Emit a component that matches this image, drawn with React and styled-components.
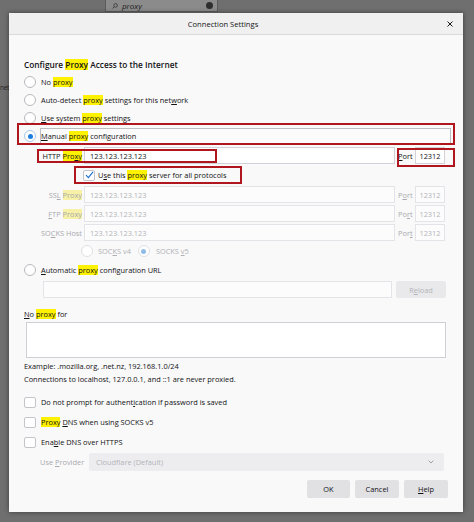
import React from 'react';
import styled, { createGlobalStyle, css } from 'styled-components';

const GlobalStyle = createGlobalStyle`
  html, body { margin: 0; padding: 0; }
  body {
    background: #6f6f6f;
    font-family: "Open Sans", "Noto Sans", sans-serif;
    font-size: 7.4px;
    color: #121214;
  }
  * { box-sizing: border-box; }
`;

const Page = styled.div`
  width: 474px;
  height: 522px;
  overflow: hidden;
  background: #6f6f6f;
`;

const TopStrip = styled.div`
  height: 13px;
  padding-left: 105px;
`;

const SearchBox = styled.div`
  width: 113px;
  height: 12px;
  background: #8b8b8b;
  border: 1px solid #5c5c5c;
  border-top: none;
  display: flex;
  align-items: center;
  gap: 4px;
  padding: 0 4px 0 6px;
  color: #1c1c1c;
  font-size: 8px;
  font-style: italic;
`;

const ClearDot = styled.span`
  margin-left: auto;
  width: 7px;
  height: 7px;
  border-radius: 50%;
  background: #2e2e2e;
`;

const Stage = styled.div`
  display: flex;
`;

const Gutter = styled.div`
  width: 9px;
  flex: none;
  padding-top: 69px;
  font-size: 6.6px;
  letter-spacing: -0.4px;
  line-height: 12px;
  color: #262626;
  white-space: nowrap;
`;

const Dialog = styled.div`
  width: 454px;
  height: 499px;
  background: #f9f9fa;
  box-shadow: 0 0 5px rgba(0, 0, 0, 0.45);
  display: flex;
  flex-direction: column;
`;

const Header = styled.div`
  height: 22px;
  flex: none;
  background: #f0f0f0;
  border-bottom: 1px solid #dadadd;
  display: flex;
  align-items: center;
`;

const Title = styled.div`
  flex: 1;
  text-align: center;
  font-size: 7.6px;
`;

const Close = styled.div`
  width: 26px;
  display: flex;
  justify-content: center;
  color: #222;
`;

const Body = styled.div`
  position: relative;
  padding: 24px 17px 0 15px;
  display: flex;
  flex-direction: column;
`;

const Heading = styled.div`
  font-size: 8.3px;
  font-weight: 600;
  line-height: 12px;
  height: 12px;
`;

const Mark = styled.span`
  background: #fff200;
`;

const Row = styled.div`
  position: relative;
  height: ${(p) => p.$h || 18}px;
  margin-top: ${(p) => p.$mt || 0}px;
  padding-left: ${(p) => p.$indent || 0}px;
  display: flex;
  align-items: center;
  gap: ${(p) => (p.$gap != null ? p.$gap : 5)}px;
`;

const Radio = styled.span`
  flex: none;
  width: 12px;
  height: 12px;
  border-radius: 50%;
  border: 1px solid ${(p) => (p.$disabled ? '#e0e0e4' : p.$on ? '#a9c9ea' : '#b9b9be')};
  background: #fff;
  display: flex;
  align-items: center;
  justify-content: center;
  &::after {
    content: '';
    display: ${(p) => (p.$on ? 'block' : 'none')};
    width: 5px;
    height: 5px;
    border-radius: 50%;
    background: ${(p) => (p.$disabled ? '#8fbce6' : '#1a7ee0')};
  }
`;

const Box = styled.span`
  flex: none;
  width: 12px;
  height: 11px;
  border-radius: 2px;
  border: 1px solid #c4c4c9;
  background: #fff;
  display: flex;
  align-items: center;
  justify-content: center;
`;

const FocusLabel = styled.span`
  flex: 1;
  height: 16px;
  margin-right: -5px;
  border: 1px solid #bdbdc2;
  background: #fbfbfb;
  display: flex;
  align-items: center;
`;

const RedBox = styled.span`
  position: absolute;
  left: ${(p) => p.$x}px;
  top: ${(p) => p.$y}px;
  width: ${(p) => p.$w}px;
  height: ${(p) => p.$h}px;
  border: 2px solid #b0161d;
  pointer-events: none;
  z-index: 2;
`;

const ProxyGrid = styled.div`
  margin-top: 2px;
  display: grid;
  grid-template-columns: 58px 311px 16px 30px;
  grid-template-rows: 17px 18px 17px 17px 17px 16px;
  column-gap: 2px;
  row-gap: 2px;
`;

const Label = styled.span`
  position: relative;
  display: flex;
  align-items: center;
  justify-content: ${(p) => (p.$left ? 'flex-start' : 'flex-end')};
  padding-left: ${(p) => (p.$left ? 1 : 0)}px;
  color: ${(p) => (p.$disabled ? '#a9a9ae' : 'inherit')};
  white-space: nowrap;
  ${(p) =>
    p.$disabled &&
    css`
      ${Mark} {
        background: #f6f1a6;
      }
    `}
`;

const Field = styled.input`
  width: 100%;
  height: 100%;
  margin: 0;
  padding: 0 ${(p) => (p.$narrow ? 3 : 5)}px;
  font: inherit;
  border: 1px solid ${(p) => (p.disabled ? '#e4e4e8' : '#d2d2d8')};
  background: ${(p) => (p.disabled ? '#fcfcfc' : '#fff')};
  color: ${(p) => (p.disabled ? '#b3b3b8' : '#121214')};
  text-align: ${(p) => (p.$narrow ? 'center' : 'left')};
  outline: none;
  -webkit-text-fill-color: currentColor;
`;

const CheckItem = styled.div`
  position: relative;
  grid-column: 2 / 5;
  justify-self: start;
  margin-left: -1px;
  display: flex;
  align-items: center;
  gap: 3px;
`;

const VersionRow = styled.div`
  grid-column: 2 / 5;
  display: flex;
  align-items: center;
  margin-left: -3px;
  color: #b0b0b5;
`;

const VersionItem = styled.span`
  display: flex;
  align-items: center;
  gap: ${(p) => p.$gap}px;
  margin-right: 7px;
`;

const UrlField = styled(Field)`
  flex: 1;
  width: auto;
`;

const GhostButton = styled.button`
  width: 50px;
  height: 17px;
  flex: none;
  border: none;
  border-radius: 2px;
  background: #e9e9ec;
  color: #b4b4b8;
  font: inherit;
  padding: 0;
`;

const SectionLabel = styled.div`
  margin-top: 10px;
  line-height: 12px;
`;

const Exceptions = styled.textarea`
  margin: 2px 0 0 2px;
  height: 36px;
  width: 420px;
  resize: none;
  border: 1px solid #cfcfd6;
  background: #fff;
  font: inherit;
  outline: none;
`;

const Hints = styled.div`
  margin-top: 2px;
  line-height: 13px;
`;

const CheckList = styled.div`
  margin-top: 6px;
  display: flex;
  flex-direction: column;
`;

const ProviderLabel = styled.span`
  width: 49px;
  flex: none;
  color: #a9a9ae;
`;

const Select = styled.div`
  flex: 1;
  height: 18px;
  margin-right: 2px;
  background: #ededf0;
  border-radius: 2px;
  color: #b3b3b8;
  display: flex;
  align-items: center;
  padding: 0 10px 0 7px;
  justify-content: space-between;
`;

const Buttons = styled.div`
  margin-top: 9px;
  margin-right: -2px;
  display: flex;
  justify-content: flex-end;
  gap: 5px;
`;

const Button = styled.button`
  width: ${(p) => p.$w || 44}px;
  height: 18px;
  padding: 0;
  border: none;
  border-radius: 2px;
  background: #e1e1e4;
  color: #121214;
  font: inherit;
`;

const Check = () => (
  <svg width="9" height="8" viewBox="0 0 9 8">
    <path d="M1 4.2 L3.4 6.6 L8 0.8" fill="none" stroke="#1a6fd0" strokeWidth="1.1" />
  </svg>
);

const Chevron = () => (
  <svg width="6" height="4" viewBox="0 0 6 4">
    <path d="M0.6 0.6 L3 3 L5.4 0.6" fill="none" stroke="#9a9aa0" strokeWidth="0.9" />
  </svg>
);

const proxyRows = [
  { label: <>SS<u>L</u> <Mark>Proxy</Mark></>, port: <>P<u>o</u>rt</> },
  { label: <><u>F</u>TP <Mark>Proxy</Mark></>, port: <>Po<u>r</u>t</> },
  { label: <>SO<u>C</u>KS Host</>, port: <>Por<u>t</u></> },
];

export default function App() {
  return (
    <Page>
      <GlobalStyle />
      <TopStrip>
        <SearchBox>
          <svg width="6" height="6" viewBox="0 0 6 6">
            <circle cx="3.6" cy="2.4" r="1.8" fill="none" stroke="#333" strokeWidth="0.8" />
            <path d="M2.3 3.7 L0.6 5.4" stroke="#333" strokeWidth="0.8" />
          </svg>
          proxy
          <ClearDot />
        </SearchBox>
      </TopStrip>
      <Stage>
        <Gutter>net</Gutter>
        <Dialog>
          <Header>
            <Title>Connection Settings</Title>
            <Close>
              <svg width="6" height="6" viewBox="0 0 6 6">
                <path d="M0.5 0.5 L5.5 5.5 M5.5 0.5 L0.5 5.5" stroke="#1a1a1a" strokeWidth="1" />
              </svg>
            </Close>
          </Header>
          <Body>
            <Heading>
              Configure <Mark>Proxy</Mark> Access to the Internet
            </Heading>
            <Row $mt={2}>
              <Radio />
              <span>
                No <Mark>proxy</Mark>
              </span>
            </Row>
            <Row>
              <Radio />
              <span>
                Auto-detect <Mark>proxy</Mark> settings for this net<u>w</u>ork
              </span>
            </Row>
            <Row>
              <Radio />
              <span>
                <u>U</u>se system <Mark>proxy</Mark> settings
              </span>
            </Row>
            <Row $gap={4}>
              <Radio $on />
              <FocusLabel>
                <span>
                  <u>M</u>anual <Mark>proxy</Mark> configuration
                </span>
              </FocusLabel>
              <RedBox $x={-7} $y={-4} $w={438} $h={22} />
            </Row>

            <ProxyGrid>
              <Label>
                <span>
                  HTTP <Mark>Pro<u>x</u>y</Mark>
                </span>
                <RedBox $x={13} $y={2} $w={180} $h={14} />
              </Label>
              <Field readOnly value="123.123.123.123" />
              <Label $left>
                <span>
                  <u>P</u>ort
                </span>
                <RedBox $x={0} $y={1} $w={58} $h={19} />
              </Label>
              <Field $narrow readOnly value="12312" />

              <CheckItem>
                <Box>
                  <Check />
                </Box>
                <span>
                  U<u>s</u>e this <Mark>proxy</Mark> server for all protocols
                </span>
                <RedBox $x={-9} $y={0} $w={168} $h={18} />
              </CheckItem>

              {proxyRows.map((r, i) => (
                <React.Fragment key={i}>
                  <Label $disabled>
                    <span>{r.label}</span>
                  </Label>
                  <Field disabled value="123.123.123.123" />
                  <Label $left $disabled>
                    <span>{r.port}</span>
                  </Label>
                  <Field $narrow disabled value="12312" />
                </React.Fragment>
              ))}

              <VersionRow>
                <VersionItem $gap={5}>
                  <Radio $disabled />
                  <span>
                    SOC<u>K</u>S v4
                  </span>
                </VersionItem>
                <VersionItem $gap={6}>
                  <Radio $disabled $on />
                  <span>
                    SOCKS <u>v</u>5
                  </span>
                </VersionItem>
              </VersionRow>
            </ProxyGrid>

            <Row $h={17} $mt={2}>
              <Radio />
              <span>
                <u>A</u>utomatic <Mark>proxy</Mark> configuration URL
              </span>
            </Row>
            <Row $h={17} $mt={3} $indent={19} $gap={4}>
              <UrlField disabled value="" />
              <GhostButton disabled>
                R<u>e</u>load
              </GhostButton>
            </Row>

            <SectionLabel>
              <u>N</u>o <Mark>proxy</Mark> for
            </SectionLabel>
            <Exceptions readOnly value="" />
            <Hints>
              <div>Example: .mozilla.org, .net.nz, 192.168.1.0/24</div>
              <div>Connections to localhost, 127.0.0.1, and ::1 are never proxied.</div>
            </Hints>

            <CheckList>
              <Row $h={20}>
                <Box />
                <span>
                  Do not prompt for authent<u>i</u>cation if password is saved
                </span>
              </Row>
              <Row $h={20}>
                <Box />
                <span>
                  <Mark>Proxy</Mark> <u>D</u>NS when using SOCKS v5
                </span>
              </Row>
              <Row $h={20}>
                <Box />
                <span>
                  Ena<u>b</u>le DNS over HTTPS
                </span>
              </Row>
            </CheckList>

            <Row $mt={1} $indent={16} $gap={0}>
              <ProviderLabel>
                Use <u>P</u>rovider
              </ProviderLabel>
              <Select>
                <span>Cloudflare (Default)</span>
                <Chevron />
              </Select>
            </Row>

            <Buttons>
              <Button $w={43}>OK</Button>
              <Button>Cancel</Button>
              <Button>
                <u>H</u>elp
              </Button>
            </Buttons>
          </Body>
        </Dialog>
      </Stage>
    </Page>
  );
}
